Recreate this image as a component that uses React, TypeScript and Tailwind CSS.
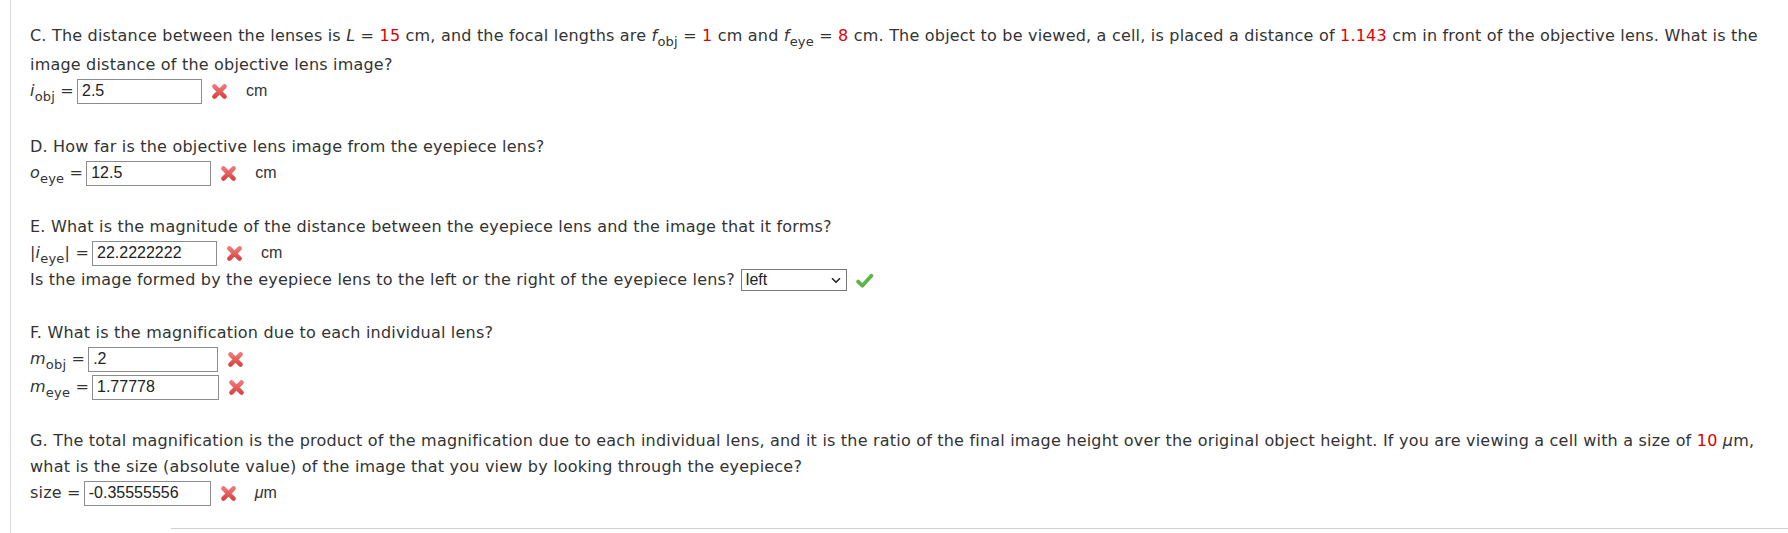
import React from 'react'

const body = { fontFamily: '"DejaVu Sans", Verdana, sans-serif' }
const arial = { fontFamily: '"Liberation Sans", Arial, sans-serif' }

const Red = ({ children }: { children: React.ReactNode }) => (
  <span className="text-[#e00000]">{children}</span>
)

const Sub = ({ children }: { children: React.ReactNode }) => (
  <span className="relative top-[5px] text-[13px] not-italic">{children}</span>
)

const WrongMark = () => (
  <svg width="17" height="17" viewBox="0 0 16 16" className="shrink-0">
    <defs>
      <linearGradient id="xg" x1="0" y1="0" x2="0" y2="1">
        <stop offset="0" stopColor="#f07575" />
        <stop offset="1" stopColor="#dc4545" />
      </linearGradient>
    </defs>
    <path d="M3.2 3.2 L12.8 12.8 M12.8 3.2 L3.2 12.8" stroke="url(#xg)" strokeWidth="4.2" strokeLinecap="round" />
  </svg>
)

const RightMark = () => (
  <svg width="19" height="17" viewBox="0 0 18 16" className="shrink-0">
    <path d="M3 9 L7 13 L15.5 3.5" stroke="#5fb548" strokeWidth="3.6" strokeLinecap="round" strokeLinejoin="round" fill="none" />
  </svg>
)

const Field = ({ value, width }: { value: string; width: string }) => (
  <div
    className={`${width} h-[25px] border border-[#8c8c8c] bg-white pl-[4px] flex items-center text-[16px] tracking-normal text-[#222]`}
    style={arial}
  >
    {value}
  </div>
)

const AnswerRow = ({
  label,
  value,
  width,
  unit,
  top,
}: {
  label: React.ReactNode
  value: string
  width: string
  unit?: React.ReactNode
  top: string
}) => (
  <div className={`h-[26px] flex items-center ${top}`}>
    <span className="whitespace-nowrap mr-[3px]">{label}</span>
    <Field value={value} width={width} />
    <span className="ml-[9px]">
      <WrongMark />
    </span>
    {unit && (
      <span className="ml-[18px] text-[16px] tracking-normal text-[#333]" style={arial}>
        {unit}
      </span>
    )}
  </div>
)

const Line = ({ children, top }: { children: React.ReactNode; top: string }) => (
  <div className={`h-[26px] flex items-center whitespace-nowrap ${top}`}>
    <span>{children}</span>
  </div>
)

export default function App() {
  return (
    <div className="w-[1788px] h-[533px] bg-white overflow-hidden flex" style={body}>
      <div className="w-[10px] shrink-0" />
      <div className="w-0 border-l border-[#dcdcdc] h-full" />

      <div className="flex-1 pl-[19px] pt-[23px] text-[16px] tracking-[0.2px] text-[#333] flex flex-col">
        {/* C */}
        <Line top="">
          C. The distance between the lenses is <i>L</i> = <Red>15</Red> cm, and the focal lengths are{' '}
          <i>f</i>
          <Sub>obj</Sub> = <Red>1</Red> cm and <i>f</i>
          <Sub>eye</Sub> = <Red>8</Red> cm. The object to be viewed, a cell, is placed a distance of{' '}
          <Red>1.143</Red> cm in front of the objective lens. What is the
        </Line>
        <Line top="mt-[3px]">image distance of the objective lens image?</Line>
        <AnswerRow
          top=""
          label={
            <>
              <i>i</i>
              <Sub>obj</Sub> =
            </>
          }
          value="2.5"
          width="w-[125px]"
          unit="cm"
        />

        {/* D */}
        <Line top="mt-[30px]">D. How far is the objective lens image from the eyepiece lens?</Line>
        <AnswerRow
          top=""
          label={
            <>
              <i>o</i>
              <Sub>eye</Sub> =
            </>
          }
          value="12.5"
          width="w-[125px]"
          unit="cm"
        />

        {/* E */}
        <Line top="mt-[28px]">
          E. What is the magnitude of the distance between the eyepiece lens and the image that it forms?
        </Line>
        <AnswerRow
          top=""
          label={
            <>
              |<i>i</i>
              <Sub>eye</Sub>| =
            </>
          }
          value="22.2222222"
          width="w-[125px]"
          unit="cm"
        />
        <div className="h-[26px] flex items-center whitespace-nowrap mt-[1px]">
          <span>Is the image formed by the eyepiece lens to the left or the right of the eyepiece lens?</span>
          <div
            className="ml-[6px] w-[106px] h-[22px] border border-[#767676] bg-white flex items-center justify-between pl-[4px] pr-[5px] text-[16px] tracking-normal text-[#222]"
            style={arial}
          >
            <span>left</span>
            <svg width="10" height="7" viewBox="0 0 10 7">
              <path d="M1 1.2 L5 5.2 L9 1.2" stroke="#222" strokeWidth="1.6" fill="none" />
            </svg>
          </div>
          <span className="ml-[8px]">
            <RightMark />
          </span>
        </div>

        {/* F */}
        <Line top="mt-[27px]">F. What is the magnification due to each individual lens?</Line>
        <AnswerRow
          top=""
          label={
            <>
              <i>m</i>
              <Sub>obj</Sub> =
            </>
          }
          value=".2"
          width="w-[130px]"
        />
        <AnswerRow
          top="mt-[2px]"
          label={
            <>
              <i>m</i>
              <Sub>eye</Sub> =
            </>
          }
          value="1.77778"
          width="w-[127px]"
        />

        {/* G */}
        <Line top="mt-[28px]">
          G. The total magnification is the product of the magnification due to each individual lens, and it is the
          ratio of the final image height over the original object height. If you are viewing a cell with a size of{' '}
          <Red>10</Red> <i>μ</i>m,
        </Line>
        <Line top="">what is the size (absolute value) of the image that you view by looking through the eyepiece?</Line>
        <AnswerRow
          top=""
          label="size ="
          value="-0.35555556"
          width="w-[127px]"
          unit={
            <>
              <i>μ</i>m
            </>
          }
        />

        <div className="ml-[141px] mt-[22px] border-t border-[#cfcfcf]" />
      </div>
    </div>
  )
}
